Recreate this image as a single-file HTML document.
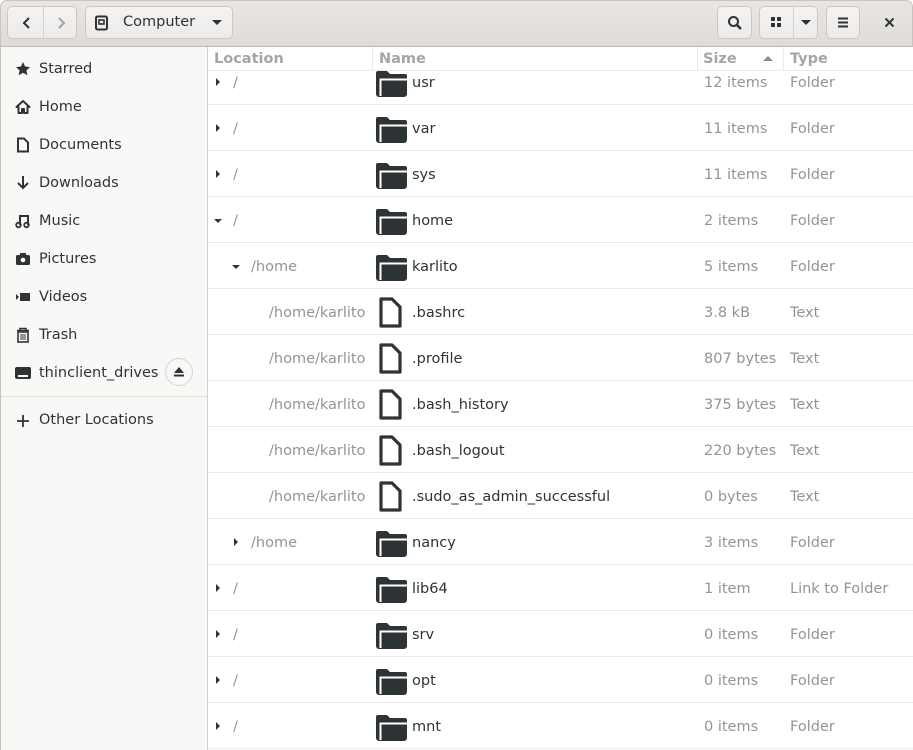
<!DOCTYPE html>
<html><head><meta charset="utf-8"><style>
*{margin:0;padding:0;box-sizing:border-box}
body{width:913px;height:750px;overflow:hidden;background:#fff;font-family:"DejaVu Sans","Liberation Sans",sans-serif;font-size:14.5px;color:#2e3436;position:relative}
.hb{position:absolute;left:0;top:0;width:913px;height:47px;background:linear-gradient(#e8e6e3,#dfdcd8);border-radius:7px 7px 0 0;border:1px solid #c9c4bf;border-bottom-color:#bfb8b1}
.btn{position:absolute;top:6px;height:33px;background:linear-gradient(#f4f3f2,#edebe9);border:1px solid #cdc7c2;border-radius:5px;box-shadow:0 1px #e0dcd8}
.side{position:absolute;left:0;top:47px;width:208px;height:703px;background:#f8f8f7;border-right:1px solid #d6d1cd;border-left:1px solid #c9c4bf}
.si{position:absolute;left:38px;font-size:14.5px;color:#2e3436}
.ic{position:absolute;left:14px}
.hdr{position:absolute;left:208px;top:47px;width:705px;height:24px;background:#fff;border-bottom:1px solid #eceae8;z-index:3;font-weight:bold;color:#a4a6a6;font-size:14.5px}
.hdr span{position:absolute;top:3px}
.hdr i{position:absolute;top:0;width:1px;height:24px;background:#eceae8}
.row{position:absolute;left:208px;width:705px;height:46px;border-bottom:1px solid #eceae8}
.row span{position:absolute;top:14px;white-space:nowrap}
.g{color:#929595}
.exp{position:absolute;top:19px;width:0;height:0}
.r{border-top:4px solid transparent;border-bottom:4px solid transparent;border-left:4px solid #2e3436}
.d{border-left:4px solid transparent;border-right:4px solid transparent;border-top:4px solid #2e3436;top:22px!important}
svg.f{position:absolute;top:10px;left:167px}
</style></head><body>
<div class="hb"></div>
<div class="btn" style="left:7px;width:70px"><div style="position:absolute;left:35px;top:0;width:1px;height:31px;background:#d5d0cc"></div>
<svg style="position:absolute;left:12px;top:8px" width="14" height="16"><path d="M9 3L4 8l5 5" stroke="#2e3436" stroke-width="2" fill="none"/></svg>
<svg style="position:absolute;left:46px;top:8px" width="14" height="16"><path d="M5 3l5 5-5 5" stroke="#a0a4a4" stroke-width="2" fill="none"/></svg></div>
<div class="btn" style="left:85px;width:148px"><svg style="position:absolute;left:8px;top:8px" width="16" height="16"><rect x="2" y="1.5" width="11" height="13" rx="1.5" fill="none" stroke="#2e3436" stroke-width="2"/><rect x="5" y="5" width="5" height="4" fill="none" stroke="#2e3436" stroke-width="1.6"/></svg>
<span style="position:absolute;left:37px;top:7px;color:#2e3436">Computer</span>
<svg style="position:absolute;left:125px;top:12px" width="12" height="8"><path d="M1 1h10L6 6z" fill="#2e3436"/></svg></div>
<div class="btn" style="left:717px;width:35px"><svg style="position:absolute;left:9px;top:8px" width="16" height="16"><circle cx="6.5" cy="6.5" r="4.5" stroke="#2e3436" stroke-width="2" fill="none"/><path d="M10 10l4 4" stroke="#2e3436" stroke-width="2.4"/></svg></div>
<div class="btn" style="left:759px;width:59px"><div style="position:absolute;left:33px;top:0;width:1px;height:31px;background:#d5d0cc"></div>
<svg style="position:absolute;left:11px;top:10px" width="12" height="12"><rect x="0" y="0" width="4" height="4" fill="#2e3436"/><rect x="6" y="0" width="4" height="4" fill="#2e3436"/><rect x="0" y="6" width="4" height="4" fill="#2e3436"/><rect x="6" y="6" width="4" height="4" fill="#2e3436"/></svg>
<svg style="position:absolute;left:40px;top:12px" width="12" height="8"><path d="M1 1h10L6 6z" fill="#2e3436"/></svg></div>
<div class="btn" style="left:826px;width:34px"><svg style="position:absolute;left:10px;top:10px" width="14" height="12"><path d="M1 1.5h10M1 5.5h10M1 9.5h10" stroke="#2e3436" stroke-width="2"/></svg></div>
<svg style="position:absolute;left:884px;top:17px" width="12" height="12"><path d="M1.5 1.5l8 8M9.5 1.5l-8 8" stroke="#2e3436" stroke-width="2"/></svg>

<div class="side">
<svg class="ic" style="top:14px" width="16" height="16"><path d="M8 1l2.1 4.5 4.9.6-3.6 3.3 1 4.8L8 11.8 3.6 14.2l1-4.8L1 6.1l4.9-.6z" fill="#2e3436"/></svg><div class="si" style="top:14px">Starred</div>
<svg class="ic" style="top:52px" width="16" height="16"><path d="M8 2L1.5 8h2v6h3.5v-4h2v4h3.5V8h2z" fill="none" stroke="#2e3436" stroke-width="2" stroke-linejoin="round"/></svg><div class="si" style="top:52px">Home</div>
<svg class="ic" style="top:90px" width="16" height="16"><path d="M3 1.5h6l4 4v9H3z" fill="none" stroke="#2e3436" stroke-width="2"/></svg><div class="si" style="top:90px">Documents</div>
<svg class="ic" style="top:128px" width="16" height="16"><path d="M8 1v12M3 8l5 5 5-5" fill="none" stroke="#2e3436" stroke-width="2"/></svg><div class="si" style="top:128px">Downloads</div>
<svg class="ic" style="top:166px" width="16" height="16"><path d="M5 12V3h8v9" fill="none" stroke="#2e3436" stroke-width="2"/><circle cx="3.5" cy="12" r="2.3" fill="none" stroke="#2e3436" stroke-width="1.8"/><circle cx="11.5" cy="12" r="2.3" fill="none" stroke="#2e3436" stroke-width="1.8"/></svg><div class="si" style="top:166px">Music</div>
<svg class="ic" style="top:204px" width="16" height="16"><rect x="1" y="4" width="14" height="10" rx="1.5" fill="#2e3436"/><rect x="5" y="2" width="6" height="3" fill="#2e3436"/><circle cx="8" cy="9" r="2.3" fill="#fff"/></svg><div class="si" style="top:204px">Pictures</div>
<svg class="ic" style="top:242px" width="16" height="16"><rect x="5" y="4" width="10" height="8" fill="#2e3436"/><path d="M1 5l3 3-3 3z" fill="#2e3436"/></svg><div class="si" style="top:242px">Videos</div>
<svg class="ic" style="top:280px" width="16" height="16"><path d="M2 3.5h12M5 3V1.5h6V3" stroke="#2e3436" stroke-width="1.6" fill="none"/><rect x="3" y="5" width="10" height="10" fill="none" stroke="#2e3436" stroke-width="1.6"/><path d="M6 7v6M8 7v6M10 7v6" stroke="#2e3436" stroke-width="1"/></svg><div class="si" style="top:280px">Trash</div>
<svg class="ic" style="top:318px" width="16" height="16"><rect x="0" y="2" width="16" height="12" rx="2" fill="#2e3436"/><rect x="3" y="10" width="10" height="2" fill="#fff"/></svg><div class="si" style="top:318px">thinclient_drives</div>
<div style="position:absolute;left:164px;top:311px;width:28px;height:28px;border:1px solid #d8d4d0;border-radius:50%"></div>
<svg style="position:absolute;left:171px;top:318px" width="14" height="14"><path d="M7 2l5 6H2z" fill="#2e3436"/><rect x="2" y="9.5" width="10" height="2" fill="#2e3436"/></svg>
<div style="position:absolute;left:0;top:349px;width:206px;height:1px;background:#e0dcd8"></div>
<svg class="ic" style="top:366px" width="16" height="16"><path d="M8 2v12M2 8h12" stroke="#2e3436" stroke-width="1.8"/></svg><div class="si" style="top:365px">Other Locations</div>
</div>

<div class="hdr"><span style="left:6px;top:4px">Location</span><i style="left:164px"></i><span style="left:171px;top:4px">Name</span><i style="left:489px"></i><span style="left:495px;top:4px">Size</span>
<svg style="position:absolute;left:555px;top:9px" width="10" height="6"><path d="M0 5L5 0l5 5z" fill="#8b8e8f"/></svg><i style="left:575px"></i><span style="left:582px;top:4px">Type</span></div>

<div id="rows"></div>
<script>
var F='<svg class="f" width="33" height="29"><path d="M3 2h9l3 3h15a2 2 0 0 1 2 2v18a3 3 0 0 1-3 3H4a3 3 0 0 1-3-3V4a2 2 0 0 1 2-2z" fill="#2e3436"/><path d="M5.5 27V10.5H32" stroke="#fff" stroke-width="2" fill="none"/></svg>';
var D='<svg class="f" width="34" height="32" style="left:170px;top:8px"><path d="M3 2h11l8 8v19H3z" fill="none" stroke="#2e3436" stroke-width="3.2" stroke-linejoin="round"/></svg>';
var rows=[
[0,'r','/','usr','12 items','Folder',1],
[0,'r','/','var','11 items','Folder',1],
[0,'r','/','sys','11 items','Folder',1],
[0,'d','/','home','2 items','Folder',1],
[18,'d','/home','karlito','5 items','Folder',1],
[36,'','/home/karlito','.bashrc','3.8 kB','Text',0],
[36,'','/home/karlito','.profile','807 bytes','Text',0],
[36,'','/home/karlito','.bash_history','375 bytes','Text',0],
[36,'','/home/karlito','.bash_logout','220 bytes','Text',0],
[36,'','/home/karlito','.sudo_as_admin_successful','0 bytes','Text',0],
[18,'r','/home','nancy','3 items','Folder',1],
[0,'r','/','lib64','1 item','Link to Folder',1],
[0,'r','/','srv','0 items','Folder',1],
[0,'r','/','opt','0 items','Folder',1],
[0,'r','/','mnt','0 items','Folder',1]];
var h='';
rows.forEach(function(r,i){
 var t=59+46*i;
 h+='<div class="row" style="top:'+t+'px">';
 if(r[1])h+='<div class="exp '+r[1]+'" style="left:'+(r[1]=='r'?8+r[0]:6+r[0])+'px"></div>';
 h+='<span class="g" style="left:'+(25+r[0])+'px;top:16px">'+r[2]+'</span>';
 h+=(r[6]?F:D);
 h+='<span style="left:204px;top:16px">'+r[3]+'</span>';
 h+='<span class="g" style="left:496px;top:16px">'+r[4]+'</span><span class="g" style="left:582px;top:16px">'+r[5]+'</span></div>';
});
document.getElementById('rows').innerHTML=h;
</script>
</body></html>
